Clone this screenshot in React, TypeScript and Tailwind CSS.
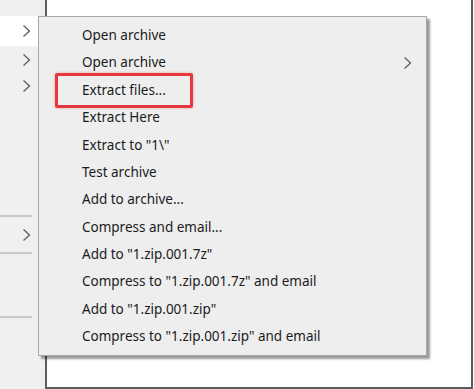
import React from 'react';

const items = [
  'Open archive',
  'Open archive',
  'Extract files...',
  'Extract Here',
  'Extract to "1\\"',
  'Test archive',
  'Add to archive...',
  'Compress and email...',
  'Add to "1.zip.001.7z"',
  'Compress to "1.zip.001.7z" and email',
  'Add to "1.zip.001.zip"',
  'Compress to "1.zip.001.zip" and email',
];

const Chevron: React.FC<{ className?: string }> = ({ className }) => (
  <svg className={className} width="9" height="14" viewBox="0 0 9 14" fill="none">
    <polyline points="1.5,1.5 7.5,7 1.5,12.5" stroke="#5f5f5f" strokeWidth="1.3" />
  </svg>
);

const App: React.FC = () => {
  return (
    <div
      className="relative w-[474px] h-[389px] bg-white overflow-hidden flex text-[#1b1b1b]"
      style={{ fontFamily: '"Noto Sans", "Open Sans", sans-serif' }}
    >
      {/* left navigation strip */}
      <div className="w-[45px] h-full bg-[#f0f0f0] flex flex-col shrink-0">
        <div className="h-[16px]" />
        <div className="h-[30px] bg-white flex items-center pl-[22px]">
          <Chevron />
        </div>
        <div className="h-[27px] flex items-center pl-[22px]">
          <Chevron />
        </div>
        <div className="h-[26px] flex items-center pl-[22px]">
          <Chevron />
        </div>
        <div className="h-[116px]" />
        <div className="w-[32px] h-[2px] bg-[#c8c8c8]" />
        <div className="h-[35px] flex items-center pl-[22px]">
          <Chevron />
        </div>
        <div className="w-[32px] h-[2px] bg-[#c8c8c8]" />
        <div className="h-[62px]" />
        <div className="w-[32px] h-[2px] bg-[#c8c8c8]" />
      </div>

      {/* content frame */}
      <div className="w-[428px] h-[389px] border-l-2 border-r-2 border-b-2 border-[#5c5c5c] bg-white" />

      {/* context menu */}
      <div className="absolute left-[38px] top-[16px] w-[389px] h-[340px] bg-[#eeeeee] border border-[#a8a8a8] shadow-[3px_3px_2px_rgba(0,0,0,0.4)] pt-[5px]">
        {items.map((label, i) => (
          <div key={i} className="h-[27.4px] flex items-center pl-[43px] pr-[14px] text-[13.5px] leading-none">
            <span className="flex-1 whitespace-nowrap">{label}</span>
            {i === 1 && <Chevron />}
          </div>
        ))}
        <div className="absolute left-[16px] top-[56px] w-[138px] h-[35px] border-[3px] border-[#e5373c] rounded-[2px] shadow-[0_0_3px_rgba(229,55,60,0.4)]" />
      </div>
    </div>
  );
};

export default App;
